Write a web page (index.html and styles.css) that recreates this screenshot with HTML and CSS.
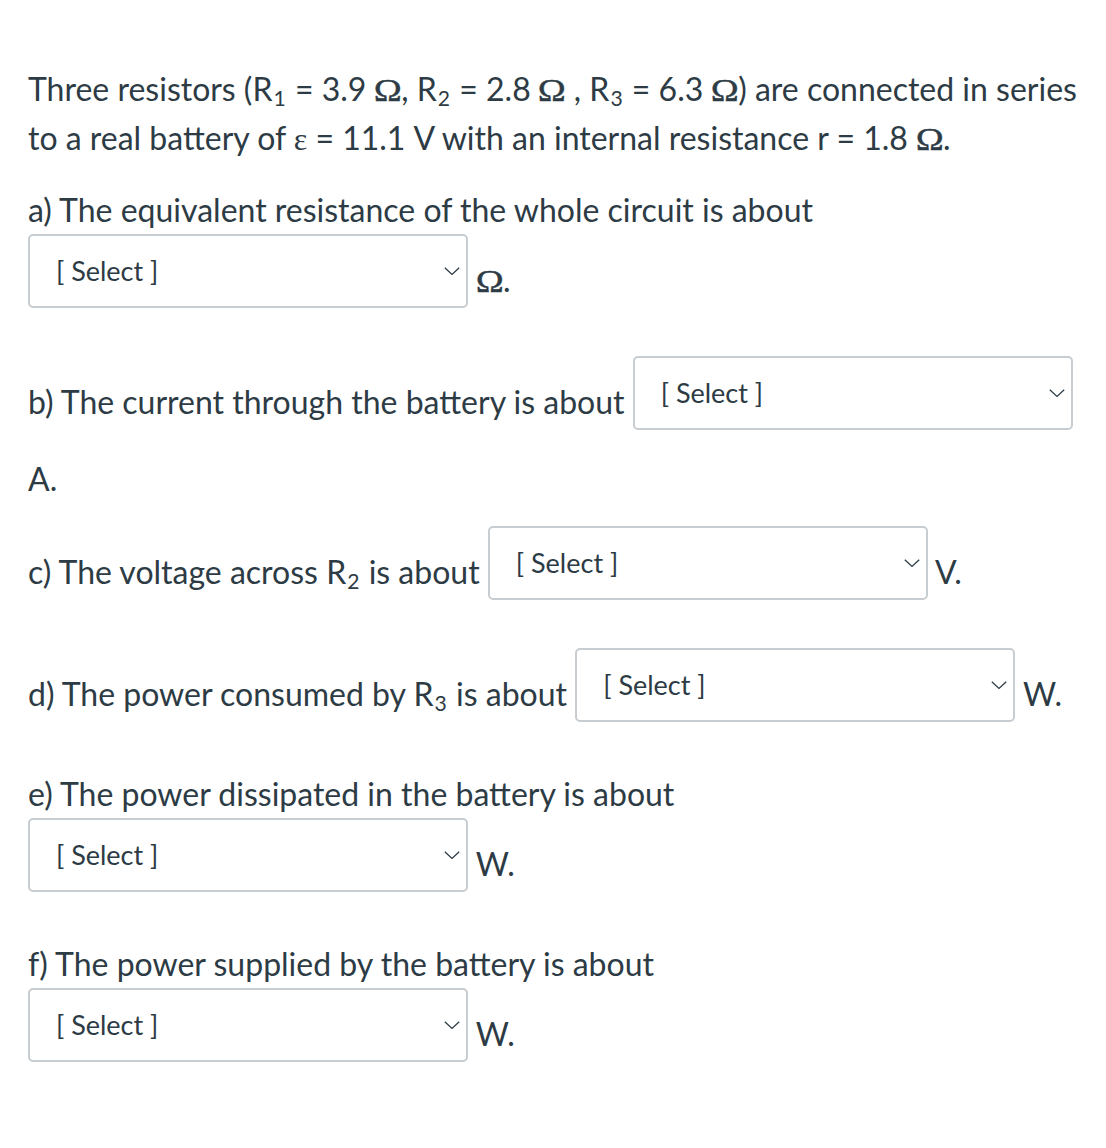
FILE: index.html
```html
<!DOCTYPE html>
<html>
<head>
<meta charset="utf-8">
<link rel="stylesheet" href="styles.css">
</head>
<body>
<div class="question">
  <p class="intro">Three resistors (R<sub>1</sub> = 3.9 <span class="om">Ω</span>, R<sub>2</sub> = 2.8 <span class="om">Ω</span> , R<sub>3</sub> = 6.3 <span class="om">Ω</span>) are connected in series to a real battery of <span class="eps">ε</span> = 11.1 V with an internal resistance r = 1.8 <span class="om">Ω</span>.</p>

  <p class="part">a) The equivalent resistance of the whole circuit is about <span class="select"><span class="label">[ Select ]</span><svg class="chev" viewBox="0 0 16 8" width="16" height="8"><path d="M0.8 0.8 L8 7.4 L15.2 0.8" fill="none" stroke="#2d3b45" stroke-width="1.3"/></svg></span> <span class="om">Ω</span>.</p>

  <p class="part">b) The current through the battery is about <span class="select"><span class="label">[ Select ]</span><svg class="chev" viewBox="0 0 16 8" width="16" height="8"><path d="M0.8 0.8 L8 7.4 L15.2 0.8" fill="none" stroke="#2d3b45" stroke-width="1.3"/></svg></span> A.</p>

  <p class="part">c) The voltage across R<sub>2</sub> is about <span class="select"><span class="label">[ Select ]</span><svg class="chev" viewBox="0 0 16 8" width="16" height="8"><path d="M0.8 0.8 L8 7.4 L15.2 0.8" fill="none" stroke="#2d3b45" stroke-width="1.3"/></svg></span> V.</p>

  <p class="part">d) The power consumed by R<sub>3</sub> is about <span class="select"><span class="label">[ Select ]</span><svg class="chev" viewBox="0 0 16 8" width="16" height="8"><path d="M0.8 0.8 L8 7.4 L15.2 0.8" fill="none" stroke="#2d3b45" stroke-width="1.3"/></svg></span> W.</p>

  <p class="part">e) The power dissipated in the battery is about <span class="select"><span class="label">[ Select ]</span><svg class="chev" viewBox="0 0 16 8" width="16" height="8"><path d="M0.8 0.8 L8 7.4 L15.2 0.8" fill="none" stroke="#2d3b45" stroke-width="1.3"/></svg></span> W.</p>

  <p class="part">f) The power supplied by the battery is about <span class="select"><span class="label">[ Select ]</span><svg class="chev" viewBox="0 0 16 8" width="16" height="8"><path d="M0.8 0.8 L8 7.4 L15.2 0.8" fill="none" stroke="#2d3b45" stroke-width="1.3"/></svg></span> W.</p>
</div>
</body>
</html>
```
FILE: styles.css
```css
html, body {
  margin: 0;
  padding: 0;
  background: #ffffff;
}
body {
  font-family: Lato, "Noto Sans", sans-serif;
  color: #2d3b45;
  font-size: 32px;
  line-height: 48px;
}
.question {
  padding: 65px 24px 0 28px;
}
p {
  margin: 0 0 23px 0;
}
sub {
  font-size: 0.66em;
  line-height: 0;
  vertical-align: -5px;
  padding: 0 1px;
}
.om {
  display: inline-block;
  font-family: "Liberation Serif", "DejaVu Serif", serif;
  transform: scaleX(1.18);
  margin: 0 1.5px 0 1.5px;
  -webkit-text-stroke: 0.4px #2d3b45;
}
.eps {
  font-family: "Liberation Serif", "DejaVu Serif", serif;
}
.select {
  display: inline-flex;
  align-items: center;
  justify-content: space-between;
  box-sizing: border-box;
  width: 440px;
  height: 74px;
  border: 2px solid #c7cdd1;
  border-radius: 5px;
  padding: 0 6px 0 26px;
  vertical-align: 11px;
  font-size: 27px;
  line-height: 34px;
  margin: 0 0 25px 0;
  background: #fff;
}
.chev {
  display: block;
}
```
